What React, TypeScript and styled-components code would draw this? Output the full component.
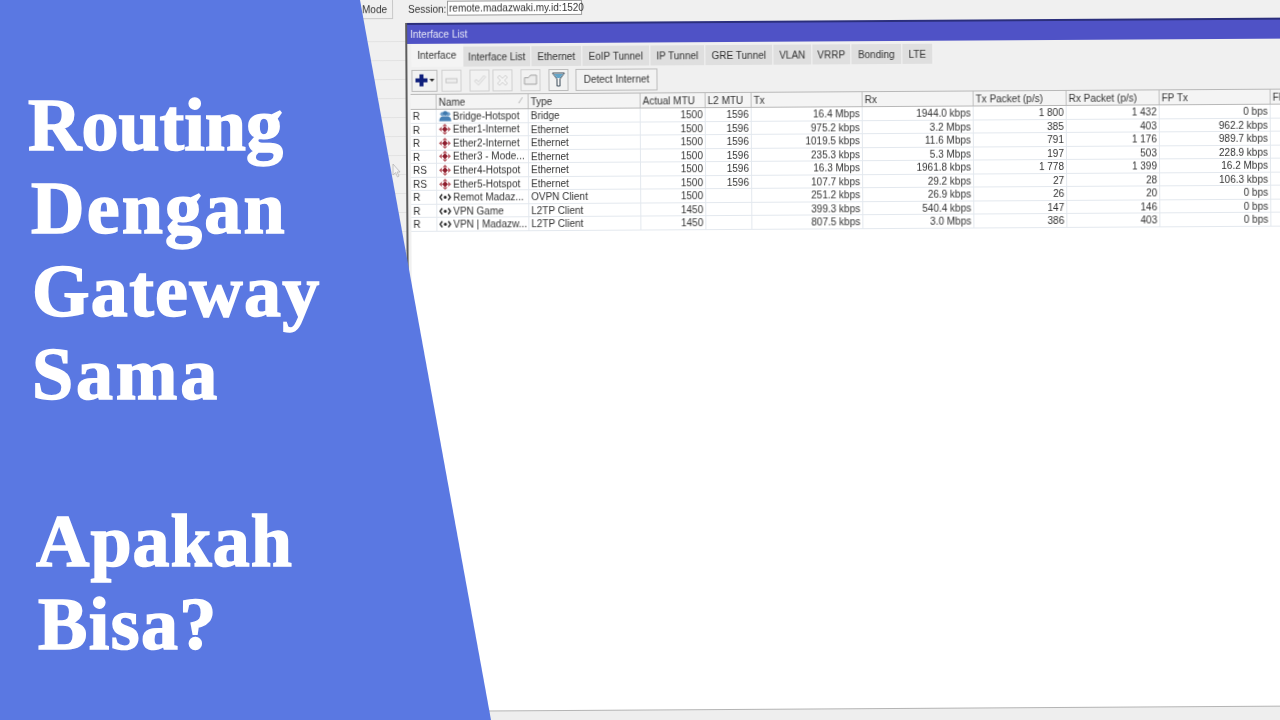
import styled, { createGlobalStyle } from 'styled-components';

const GlobalStyle = createGlobalStyle`
  html, body {
    margin: 0;
    padding: 0;
    background: #f0f0f0;
  }
`;

const BridgeIcon = () => (
  <svg width="13" height="11" viewBox="0 0 13 11">
    <circle cx="3.5" cy="3.2" r="2" fill="#6f9fca" />
    <circle cx="9.5" cy="3.2" r="2" fill="#6f9fca" />
    <circle cx="6.5" cy="2.6" r="2.4" fill="#3d78ad" />
    <path d="M0.5 10.5 C0.5 6.5 3 5.4 4.5 5.4 H8.5 C10 5.4 12.5 6.5 12.5 10.5 Z" fill="#4680b5" />
  </svg>
);

const EtherIcon = () => (
  <svg width="12" height="11" viewBox="0 0 12 11">
    <path d="M6 2.4 L9 5.5 L6 8.6 L3 5.5 Z" fill="#8c1c2c" />
    <path d="M6 0 L8.6 2.4 H3.4 Z M6 11 L8.6 8.6 H3.4 Z M0 5.5 L2.8 3 V8 Z M12 5.5 L9.2 3 V8 Z" fill="#b4525c" />
  </svg>
);

const VpnIcon = () => (
  <svg width="12" height="9" viewBox="0 0 12 9">
    <path d="M3 1.5 L0.8 4.5 L3 7.5 M9 1.5 L11.2 4.5 L9 7.5" fill="none" stroke="#222" strokeWidth="1.3" />
    <circle cx="6" cy="4.5" r="1.5" fill="#222" />
  </svg>
);

const ICONS = { bridge: BridgeIcon, ether: EtherIcon, vpn: VpnIcon };

const TABS = [
  { label: 'Interface', width: 52, active: true },
  { label: 'Interface List', width: 68 },
  { label: 'Ethernet', width: 51 },
  { label: 'EoIP Tunnel', width: 68 },
  { label: 'IP Tunnel', width: 55 },
  { label: 'GRE Tunnel', width: 68 },
  { label: 'VLAN', width: 39 },
  { label: 'VRRP', width: 39 },
  { label: 'Bonding', width: 51 },
  { label: 'LTE', width: 31 },
];

const COLUMNS = ['', 'Name', 'Type', 'Actual MTU', 'L2 MTU', 'Tx', 'Rx', 'Tx Packet (p/s)', 'Rx Packet (p/s)', 'FP Tx', 'FP Rx'];

type Row = {
  flag: string;
  icon: keyof typeof ICONS;
  values: string[];
};

const ROWS: Row[] = [
  { flag: 'R', icon: 'bridge', values: ['Bridge-Hotspot', 'Bridge', '1500', '1596', '16.4 Mbps', '1944.0 kbps', '1 800', '1 432', '0 bps'] },
  { flag: 'R', icon: 'ether', values: ['Ether1-Internet', 'Ethernet', '1500', '1596', '975.2 kbps', '3.2 Mbps', '385', '403', '962.2 kbps'] },
  { flag: 'R', icon: 'ether', values: ['Ether2-Internet', 'Ethernet', '1500', '1596', '1019.5 kbps', '11.6 Mbps', '791', '1 176', '989.7 kbps'] },
  { flag: 'R', icon: 'ether', values: ['Ether3 - Mode...', 'Ethernet', '1500', '1596', '235.3 kbps', '5.3 Mbps', '197', '503', '228.9 kbps'] },
  { flag: 'RS', icon: 'ether', values: ['Ether4-Hotspot', 'Ethernet', '1500', '1596', '16.3 Mbps', '1961.8 kbps', '1 778', '1 399', '16.2 Mbps'] },
  { flag: 'RS', icon: 'ether', values: ['Ether5-Hotspot', 'Ethernet', '1500', '1596', '107.7 kbps', '29.2 kbps', '27', '28', '106.3 kbps'] },
  { flag: 'R', icon: 'vpn', values: ['Remot Madaz...', 'OVPN Client', '1500', '', '251.2 kbps', '26.9 kbps', '26', '20', '0 bps'] },
  { flag: 'R', icon: 'vpn', values: ['VPN Game', 'L2TP Client', '1450', '', '399.3 kbps', '540.4 kbps', '147', '146', '0 bps'] },
  { flag: 'R', icon: 'vpn', values: ['VPN | Madazw...', 'L2TP Client', '1450', '', '807.5 kbps', '3.0 Mbps', '386', '403', '0 bps'] },
];

const TITLE_TOP = [
  { text: 'Routing', indent: 28, spacing: 0 },
  { text: 'Dengan', indent: 31, spacing: 2.2 },
  { text: 'Gateway', indent: 32, spacing: 1.3 },
  { text: 'Sama', indent: 32, spacing: 2.8 },
];

const TITLE_BOTTOM = [
  { text: 'Apakah', indent: 36, spacing: 1 },
  { text: 'Bisa?', indent: 38, spacing: 1.4 },
];

const App = () => {
  return (
    <Screen>
      <GlobalStyle />
      <Desktop>
        <TopBar>
          <ModeButton>Mode</ModeButton>
          <SessionLabel>Session:</SessionLabel>
          <SessionInput>remote.madazwaki.my.id:1520</SessionInput>
        </TopBar>
        <Workspace>
          <Sidebar>
            {Array.from({ length: 14 }).map((_, i) => (
              <SidebarRow key={i} />
            ))}
            <MouseCursor width="9" height="15" viewBox="0 0 9 15">
              <path d="M1 1 V12 L3.5 9.5 L5.5 14 L7 13 L5 9 H8 Z" fill="#f4f4f4" stroke="#b4b4b4" strokeWidth="0.8" />
            </MouseCursor>
          </Sidebar>
          <Window>
            <TitleBar>Interface List</TitleBar>
            <TabStrip>
              {TABS.map((tab) => (
                <Tab key={tab.label} $width={tab.width} $active={!!tab.active}>
                  {tab.label}
                </Tab>
              ))}
            </TabStrip>
            <Toolbar>
              <ToolButton $width={26} $gap={4}>
                <svg width="21" height="15" viewBox="0 0 21 15">
                  <path d="M5 1.5 H9 V5.5 H13 V9.5 H9 V13.5 H5 V9.5 H1 V5.5 H5 Z" fill="#10207c" />
                  <path d="M15 6 H20 L17.5 9 Z" fill="#222" />
                </svg>
              </ToolButton>
              <ToolButton $width={20} $gap={8} $muted>
                <svg width="12" height="6" viewBox="0 0 12 6">
                  <rect x="0.5" y="1" width="11" height="4" fill="#eeeeee" stroke="#c6c6c6" />
                </svg>
              </ToolButton>
              <ToolButton $width={20} $gap={3} $muted>
                <svg width="13" height="12" viewBox="0 0 13 12">
                  <path d="M1 6.5 L3 5 L5 7.5 L10.5 1 L12 2.5 L5 10.5 Z" fill="#f4f4f4" stroke="#c6c6c6" strokeWidth="0.8" />
                </svg>
              </ToolButton>
              <ToolButton $width={20} $gap={8} $muted>
                <svg width="12" height="12" viewBox="0 0 12 12">
                  <path d="M1 3 L3 1 L6 4 L9 1 L11 3 L8 6 L11 9 L9 11 L6 8 L3 11 L1 9 L4 6 Z" fill="#f4f4f4" stroke="#c6c6c6" strokeWidth="0.8" />
                </svg>
              </ToolButton>
              <ToolButton $width={20} $gap={8} $muted>
                <svg width="14" height="11" viewBox="0 0 14 11">
                  <path d="M1 3.5 H5 L7 1 H13 V10 H1 Z" fill="#ececec" stroke="#a2a2a2" />
                </svg>
              </ToolButton>
              <ToolButton $width={20} $gap={7}>
                <svg width="14" height="15" viewBox="0 0 14 15">
                  <path d="M1 1 H13 L8.5 7 V14 H5.5 V7 Z" fill="#f4f4f4" stroke="#3a4a58" strokeWidth="1" />
                  <path d="M2.5 2 H11.5 L8.5 6 H5.5 Z" fill="#62a4c9" />
                </svg>
              </ToolButton>
              <DetectButton>Detect Internet</DetectButton>
            </Toolbar>
            <ListArea>
              <HeaderRow>
                {COLUMNS.map((col, i) => (
                  <HeaderCell key={i}>
                    {col}
                    {col === 'Name' && <SortMark>⁄</SortMark>}
                  </HeaderCell>
                ))}
              </HeaderRow>
              {ROWS.map((row) => {
                const Icon = ICONS[row.icon];
                return (
                  <DataRow key={row.values[0]}>
                    <DataCell>{row.flag}</DataCell>
                    <NameCell>
                      <IconSlot>
                        <Icon />
                      </IconSlot>
                      {row.values[0]}
                    </NameCell>
                    <DataCell>{row.values[1]}</DataCell>
                    {row.values.slice(2).map((value, i) => (
                      <DataCell key={i} $right>
                        {value}
                      </DataCell>
                    ))}
                    <DataCell />
                  </DataRow>
                );
              })}
            </ListArea>
            <StatusBar />
          </Window>
        </Workspace>
      </Desktop>
      <BluePanel>
        {TITLE_TOP.map((line) => (
          <TitleLine key={line.text} $indent={line.indent} $spacing={line.spacing}>
            {line.text}
          </TitleLine>
        ))}
        <TitleSpacer />
        {TITLE_BOTTOM.map((line) => (
          <TitleLine key={line.text} $indent={line.indent} $spacing={line.spacing}>
            {line.text}
          </TitleLine>
        ))}
      </BluePanel>
    </Screen>
  );
};

export default App;

const GRID = '26px 92px 112px 65px 46px 111px 111px 93px 93px 111px 60px';

const Screen = styled.div`
  position: relative;
  width: 1280px;
  height: 720px;
  overflow: hidden;
  background: #f0f0f0;
`;

const Desktop = styled.div`
  width: 1320px;
  height: 760px;
  display: flex;
  flex-direction: column;
  transform: rotate(-0.35deg);
  transform-origin: 400px 0;
  filter: blur(0.35px);
  font-family: 'Liberation Sans', Arial, sans-serif;
  font-size: 10px;
  color: #333;
`;

const TopBar = styled.div`
  height: 23px;
  flex: none;
  display: flex;
  align-items: flex-start;
  padding-left: 360px;
`;

const ModeButton = styled.div`
  width: 33px;
  height: 19px;
  box-sizing: border-box;
  border-right: 1px solid #c8c8c8;
  border-bottom: 1px solid #c8c8c8;
  line-height: 20px;
  padding-left: 2px;
`;

const SessionLabel = styled.div`
  margin-left: 15px;
  width: 39px;
  line-height: 20px;
`;

const SessionInput = styled.div`
  width: 135px;
  height: 15px;
  box-sizing: border-box;
  margin-top: 1px;
  border: 1px solid #9a9a9a;
  background: #fff;
  line-height: 13px;
  padding-left: 1px;
  white-space: nowrap;
`;

const Workspace = styled.div`
  flex: 1;
  display: flex;
  min-height: 0;
`;

const Sidebar = styled.div`
  position: relative;
  width: 405px;
  flex: none;
  display: flex;
  flex-direction: column;
  padding-left: 360px;
  box-sizing: border-box;
`;

const SidebarRow = styled.div`
  height: 18px;
  flex: none;
  border-bottom: 1px solid #e2e2e2;
`;

const MouseCursor = styled.svg`
  position: absolute;
  left: 391px;
  top: 140px;
`;

const Window = styled.div`
  flex: 1;
  min-width: 0;
  display: flex;
  flex-direction: column;
  border-left: 2px solid #5c5c5c;
  background: #f0f0f0;
`;

const TitleBar = styled.div`
  height: 21px;
  flex: none;
  box-sizing: border-box;
  border-top: 2px solid #2b2f7c;
  background: #4f52c6;
  color: #e8e8f6;
  line-height: 20px;
  padding-left: 3px;
`;

const TabStrip = styled.div`
  height: 23px;
  flex: none;
  display: flex;
  align-items: flex-end;
  padding-left: 4px;
`;

const Tab = styled.div<{ $width: number; $active: boolean }>`
  width: ${(props) => props.$width}px;
  height: ${(props) => (props.$active ? 23 : 20)}px;
  box-sizing: border-box;
  display: flex;
  align-items: center;
  justify-content: center;
  background: ${(props) => (props.$active ? '#f4f4f4' : '#dfdfdf')};
  border-right: 1px solid #f4f4f4;
  white-space: nowrap;
`;

const Toolbar = styled.div`
  height: 27px;
  flex: none;
  display: flex;
  align-items: center;
  padding-left: 4px;
`;

const ToolButton = styled.div<{ $width: number; $gap: number; $muted?: boolean }>`
  width: ${(props) => props.$width}px;
  height: 22px;
  flex: none;
  box-sizing: border-box;
  margin-right: ${(props) => props.$gap}px;
  display: flex;
  align-items: center;
  justify-content: center;
  border: 1px solid ${(props) => (props.$muted ? '#d0d0d0' : '#bcbcbc')};
  background: #f2f2f2;
`;

const DetectButton = styled.div`
  width: 82px;
  height: 22px;
  box-sizing: border-box;
  border: 1px solid #bcbcbc;
  background: #f2f2f2;
  display: flex;
  align-items: center;
  justify-content: center;
  white-space: nowrap;
`;

const ListArea = styled.div`
  height: 617px;
  flex: none;
  margin-left: 3px;
  background: #fff;
  border-bottom: 1px solid #b4b4b4;
`;

const HeaderRow = styled.div`
  display: grid;
  grid-template-columns: ${GRID};
  height: 16px;
  box-sizing: border-box;
  border-top: 1px solid #b8b8b8;
  border-bottom: 1px solid #b8b8b8;
  background: #f4f4f4;
`;

const HeaderCell = styled.div`
  position: relative;
  box-sizing: border-box;
  border-right: 1px solid #c0c0c0;
  padding-left: 2px;
  line-height: 15px;
  white-space: nowrap;
  overflow: hidden;
`;

const SortMark = styled.span`
  position: absolute;
  right: 6px;
  top: -1px;
  color: #9a9a9a;
  font-size: 9px;
`;

const DataRow = styled.div`
  display: grid;
  grid-template-columns: ${GRID};
  height: 13.55px;
  box-sizing: border-box;
  border-bottom: 1px solid #e3e8ee;
`;

const DataCell = styled.div<{ $right?: boolean }>`
  box-sizing: border-box;
  border-right: 1px solid #e3e8ee;
  padding: 0 2px;
  line-height: 13px;
  text-align: ${(props) => (props.$right ? 'right' : 'left')};
  white-space: nowrap;
  overflow: hidden;
`;

const NameCell = styled(DataCell)`
  display: flex;
  align-items: center;
`;

const IconSlot = styled.span`
  width: 14px;
  flex: none;
  display: flex;
  align-items: center;
`;

const StatusBar = styled.div`
  flex: 1;
  background: #eeeeee;
`;

const BluePanel = styled.div`
  position: absolute;
  left: 0;
  top: 0;
  width: 492px;
  height: 720px;
  box-sizing: border-box;
  padding-top: 84px;
  display: flex;
  flex-direction: column;
  background: #5a78e2;
  clip-path: polygon(0 0, 360px 0, 491px 720px, 0 720px);
`;

const TitleLine = styled.div<{ $indent: number; $spacing: number }>`
  height: 83px;
  flex: none;
  padding-left: ${(props) => props.$indent}px;
  font-family: 'Liberation Serif', 'Times New Roman', serif;
  font-weight: 700;
  font-size: 74px;
  line-height: 83px;
  letter-spacing: ${(props) => props.$spacing}px;
  color: #fff;
  -webkit-text-stroke: 1.5px #fff;
  white-space: nowrap;
`;

const TitleSpacer = styled.div`
  height: 84px;
  flex: none;
`;
